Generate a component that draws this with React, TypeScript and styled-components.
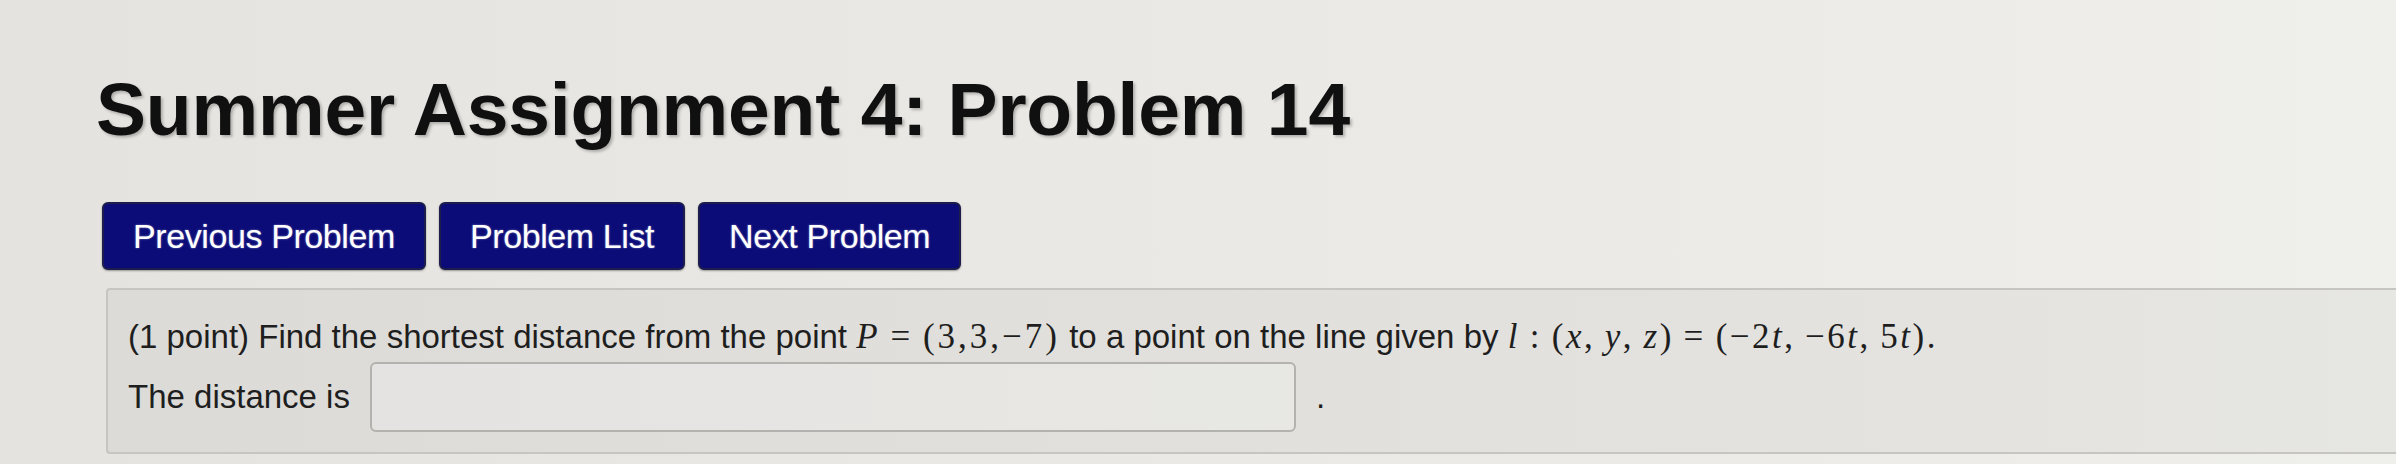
import styled, { createGlobalStyle } from "styled-components";

const GlobalStyle = createGlobalStyle`
  html, body {
    margin: 0;
    padding: 0;
    overflow: hidden;
  }
  body {
    background: linear-gradient(90deg, #e4e3df 0%, #e9e8e4 40%, #ecebe8 75%, #efefec 100%);
    font-family: "Liberation Sans", Arial, sans-serif;
    color: #1c1c1c;
  }
`;

const Page = styled.div`
  width: 2396px;
  height: 464px;
  box-sizing: border-box;
  padding: 72px 0 0 98px;
  overflow: hidden;
`;

const Title = styled.h1`
  margin: 0 0 55px -2px;
  font-size: 75px;
  line-height: 75px;
  font-weight: bold;
  color: #101010;
  letter-spacing: -0.2px;
  text-shadow: 2px 2px 3px rgba(0, 0, 0, 0.25);
`;

const NavBar = styled.div`
  display: flex;
  gap: 13px;
  margin-left: 4px;
`;

const NavButton = styled.button`
  height: 68px;
  padding: 0 29px;
  background: #0b0c78;
  border: 2px solid #1c1d4a;
  border-radius: 6px;
  color: #ffffff;
  font-family: "Liberation Sans", Arial, sans-serif;
  font-size: 34px;
  letter-spacing: -0.4px;
  text-shadow: 0 0 2px rgba(255, 255, 255, 0.5);
  box-shadow: 0 1px 2px rgba(0, 0, 0, 0.35);
  cursor: pointer;
`;

const ProblemBox = styled.div`
  margin: 18px -40px 0 8px;
  padding: 25px 21px 20px 20px;
  background: rgba(120, 120, 115, 0.07);
  border: 2px solid #c6c5c1;
  border-right: none;
  border-radius: 4px 0 0 4px;
`;

const Statement = styled.div`
  font-size: 33px;
  line-height: 44px;
  color: #1e1e1e;
  white-space: nowrap;
`;

// MathJax glyphs run wider than Times, so spread them a little
const Math = styled.span<{ $spread?: number }>`
  font-family: "Liberation Serif", "Times New Roman", serif;
  font-size: 35px;
  line-height: 44px;
  letter-spacing: ${(p) => p.$spread ?? 2.5}px;
  color: #1e1e1e;
`;

const Var = styled.i`
  font-family: "Liberation Serif", "Times New Roman", serif;
  font-style: italic;
`;

const Op = styled.span<{ $space?: number }>`
  padding: 0 ${(p) => p.$space ?? 0.28}em;
`;

const AnswerRow = styled.div`
  display: flex;
  align-items: center;
  margin-top: 3px;
  font-size: 33px;
  color: #1e1e1e;
`;

const AnswerInput = styled.input`
  width: 926px;
  height: 70px;
  margin-left: 20px;
  box-sizing: border-box;
  background: rgba(255, 255, 255, 0.22);
  border: 2px solid #b3b2ae;
  border-radius: 6px;
  outline: none;
  font-size: 30px;
`;

const Period = styled.span`
  margin-left: 20px;
`;

const comma = <Op $space={0}>,&#8201;</Op>;
const tightComma = <Op $space={0}>,</Op>;

export default function App() {
  return (
    <>
      <GlobalStyle />
      <Page>
        <Title>Summer Assignment 4: Problem 14</Title>

        <NavBar>
          <NavButton>Previous Problem</NavButton>
          <NavButton>Problem List</NavButton>
          <NavButton>Next Problem</NavButton>
        </NavBar>

        <ProblemBox>
          <Statement>
            (1 point) Find the shortest distance from the point{" "}
            <Math $spread={3}>
              <Var>P</Var>
              <Op>=</Op>(3{tightComma}3{tightComma}−7)
            </Math>{" "}
            to a point on the line given by{" "}
            <Math>
              <Var>l</Var>
              <Op>:</Op>(<Var>x</Var>
              {comma}
              <Var>y</Var>
              {comma}
              <Var>z</Var>)<Op>=</Op>(−2<Var>t</Var>
              {comma}−6<Var>t</Var>
              {comma}5<Var>t</Var>).
            </Math>
          </Statement>
          <AnswerRow>
            The distance is
            <AnswerInput type="text" aria-label="answer" />
            <Period>.</Period>
          </AnswerRow>
        </ProblemBox>
      </Page>
    </>
  );
}
